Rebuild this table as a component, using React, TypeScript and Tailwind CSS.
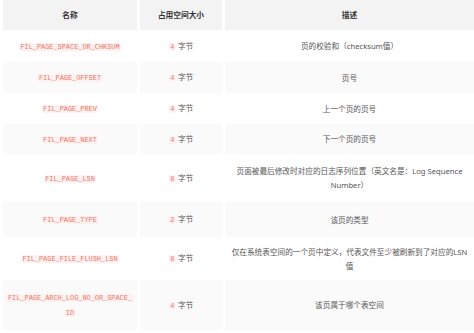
import React from 'react';

type Row = {
  name: React.ReactNode;
  size: string;
  desc: React.ReactNode;
  h: string;
  alt: boolean;
};

const Code: React.FC<{ children: React.ReactNode }> = ({ children }) => (
  <code className="font-['Liberation_Mono',monospace] text-[6.9px] text-[#ee7264] bg-[#fdf2f1] px-[1.5px] rounded-[2px] [box-decoration-break:clone]">
    {children}
  </code>
);

const rows: Row[] = [
  { name: 'FIL_PAGE_SPACE_OR_CHKSUM', size: '4', desc: '页的校验和（checksum值）', h: 'h-[32px]', alt: false },
  { name: 'FIL_PAGE_OFFSET', size: '4', desc: '页号', h: 'h-[31px]', alt: true },
  { name: 'FIL_PAGE_PREV', size: '4', desc: '上一个页的页号', h: 'h-[31px]', alt: false },
  { name: 'FIL_PAGE_NEXT', size: '4', desc: '下一个页的页号', h: 'h-[30px]', alt: true },
  {
    name: 'FIL_PAGE_LSN',
    size: '8',
    desc: '页面被最后修改时对应的日志序列位置（英文名是：Log Sequence Number）',
    h: 'h-[48px]',
    alt: false,
  },
  { name: 'FIL_PAGE_TYPE', size: '2', desc: '该页的类型', h: 'h-[35px]', alt: true },
  {
    name: 'FIL_PAGE_FILE_FLUSH_LSN',
    size: '8',
    desc: (
      <>
        仅在系统表空间的一个页中定义，代表文件至少被刷新到了对应的LSN
        <br />值
      </>
    ),
    h: 'h-[43px]',
    alt: false,
  },
  {
    name: (
      <>
        FIL_PAGE_ARCH_LOG_NO_OR_SPACE_
        <br />
        ID
      </>
    ),
    size: '4',
    desc: '该页属于哪个表空间',
    h: 'h-[50px]',
    alt: true,
  },
];

export default function App() {
  return (
    <div className="w-[474px] h-[333px] overflow-hidden bg-white font-['Noto_Sans','Noto_Sans_CJK_SC',sans-serif]">
      <table className="w-[477px] table-fixed border-separate border-spacing-x-[3px] border-spacing-y-0 text-[7.65px] leading-[14px] text-[#555]">
        <colgroup>
          <col className="w-[134px]" />
          <col className="w-[82px]" />
          <col />
        </colgroup>
        <thead>
          <tr className="h-[30px]">
            {['名称', '占用空间大小', '描述'].map((t) => (
              <th key={t} className="bg-[#f3f3f3] text-[#333] font-bold text-[7.7px] align-middle px-[4px]">
                {t}
              </th>
            ))}
          </tr>
        </thead>
        <tbody>
          {rows.map((r, i) => {
            const bg = r.alt ? 'bg-[#fafafa]' : 'bg-white';
            return (
              <tr key={i} className={r.h}>
                <td className={`${bg} text-center align-middle px-[2px]`}>
                  <Code>{r.name}</Code>
                </td>
                <td className={`${bg} text-center align-middle px-[4px]`}>
                  <Code>{r.size}</Code> 字节
                </td>
                <td className={`${bg} text-center align-middle px-[4px]`}>{r.desc}</td>
              </tr>
            );
          })}
        </tbody>
      </table>
    </div>
  );
}
